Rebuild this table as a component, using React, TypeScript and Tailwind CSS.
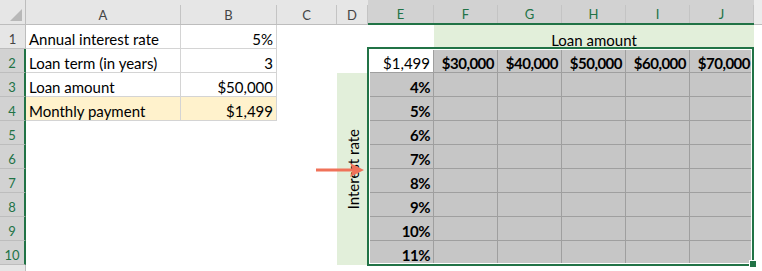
import React from "react";

function ColHead({ label, sel }: { label: string; sel?: boolean }) {
  return sel ? (
    <div className="bg-[#d2d2d2] border-b-2 border-[#217346] pt-[5px]">
      <div className="h-full border-r border-[#c4c4c4] flex items-center justify-center text-[13px] leading-[18px] text-[#217346]">
        {label}
      </div>
    </div>
  ) : (
    <div className="bg-[#e6e6e6] border-b border-[#bdbdbd] pt-[5px]">
      <div className="h-full border-r border-[#c4c4c4] flex items-center justify-center text-[13px] leading-[18px] text-[#444444]">
        {label}
      </div>
    </div>
  );
}

function RowHead({ n, sel }: { n: number; sel?: boolean }) {
  return sel ? (
    <div className="bg-[#d2d2d2] border-b border-r-2 border-[#bdbdbd] border-r-[#217346] flex items-end justify-center text-[13px] leading-[18px] text-[#217346]">
      {n}
    </div>
  ) : (
    <div className="bg-[#e6e6e6] border-b border-r border-[#bdbdbd] flex items-end justify-center text-[13px] leading-[18px] text-[#444444]">
      {n}
    </div>
  );
}

function GrayCell({ text }: { text?: string }) {
  return (
    <div className="bg-[#c6c6c6] border-r border-b border-[#9f9f9f] flex items-end justify-end px-[3px] leading-[18px] font-bold tracking-[-0.5px]">
      {text}
    </div>
  );
}

const pcts = ["4%", "5%", "6%", "7%", "8%", "9%", "10%", "11%"];
const amounts = ["$30,000", "$40,000", "$50,000", "$60,000", "$70,000"];

export default function App() {
  const leftData: [string, string][] = [
    ["Annual interest rate", "5%"],
    ["Loan term (in years)", "3"],
    ["Loan amount", "$50,000"],
    ["Monthly payment", "$1,499"],
  ];

  const rows: React.ReactNode[] = [];
  for (let r = 1; r <= 10; r++) {
    rows.push(<RowHead key={`rh${r}`} n={r} sel={r >= 2} />);
    if (r <= 4) {
      const yellow = r === 4;
      rows.push(
        <div
          key={`a${r}`}
          className={
            yellow
              ? "bg-[#fff2cc] border-r border-b border-[#d4d4d4] flex items-end px-[3px] leading-[18px]"
              : "border-r border-b border-[#d4d4d4] flex items-end px-[3px] leading-[18px]"
          }
        >
          {leftData[r - 1][0]}
        </div>
      );
      rows.push(
        <div
          key={`b${r}`}
          className={
            yellow
              ? "bg-[#fff2cc] border-r border-b border-[#d4d4d4] flex items-end justify-end px-[3px] leading-[18px]"
              : "border-r border-b border-[#d4d4d4] flex items-end justify-end px-[3px] leading-[18px]"
          }
        >
          {leftData[r - 1][1]}
        </div>
      );
    } else {
      rows.push(<div key={`a${r}`} />);
      rows.push(<div key={`b${r}`} />);
    }
    rows.push(<div key={`c${r}`} />);
    if (r <= 2) rows.push(<div key={`d${r}`} />);
    if (r === 3)
      rows.push(
        <div
          key="d3"
          className="row-span-8 bg-[#e2efda] flex items-center justify-center"
        >
          <span className="[writing-mode:vertical-rl] rotate-180 leading-[18px] whitespace-nowrap">
            Interest rate
          </span>
        </div>
      );
    if (r === 1) {
      rows.push(<div key="e1" />);
      rows.push(
        <div
          key="f1"
          className="col-span-5 bg-[#e2efda] flex items-end justify-center leading-[18px]"
        >
          Loan amount
        </div>
      );
    } else if (r === 2) {
      rows.push(
        <div
          key="e2"
          className="bg-white border-r border-b border-[#9f9f9f] flex items-end justify-end px-[3px] leading-[18px]"
        >
          $1,499
        </div>
      );
      amounts.forEach((a) => rows.push(<GrayCell key={`h${a}`} text={a} />));
    } else {
      rows.push(<GrayCell key={`e${r}`} text={pcts[r - 3]} />);
      for (let c = 0; c < 5; c++) rows.push(<GrayCell key={`g${r}-${c}`} />);
    }
    rows.push(<div key={`z${r}`} />);
  }

  return (
    <div className="w-[762px] h-[271px] bg-white overflow-hidden font-['Lato',sans-serif] text-[15px] text-black">
      <div className="relative w-[762px] h-[271px] grid grid-cols-[26px_155px_96px_60px_31px_66px_64px_64px_64px_64px_64px_1fr] grid-rows-[25px_repeat(10,24px)_1fr]">
        <div className="bg-[#e6e6e6] border-r border-b border-[#bdbdbd]">
          <svg width="25" height="24" viewBox="0 0 25 24">
            <polygon points="22,9 22,21 10,21" fill="#b8b8b8" />
          </svg>
        </div>
        <ColHead label="A" />
        <ColHead label="B" />
        <ColHead label="C" />
        <ColHead label="D" />
        <ColHead label="E" sel />
        <ColHead label="F" sel />
        <ColHead label="G" sel />
        <ColHead label="H" sel />
        <ColHead label="I" sel />
        <ColHead label="J" sel />
        <div className="bg-[#ececec] border-b border-[#bdbdbd]" />

        {rows}

        <div className="bg-[#e6e6e6] border-r border-[#bdbdbd]" />
        <div className="col-span-11" />

        <div className="absolute left-[367px] top-[47px] w-[387px] h-[219px] border-2 border-[#217346] shadow-[inset_0_0_0_1px_white] pointer-events-none">
          <div className="absolute -right-[4px] -bottom-[3px] w-[7px] h-[7px] bg-[#217346] border-l border-t border-white" />
        </div>

        <svg
          className="absolute left-[314px] top-[161px] pointer-events-none"
          width="52"
          height="18"
          viewBox="0 0 52 18"
        >
          <line x1="2" y1="9" x2="40" y2="9" stroke="#f07259" strokeWidth="3" />
          <polygon points="36,2 50,9 36,16 39,9" fill="#f07259" />
        </svg>
      </div>
    </div>
  );
}
